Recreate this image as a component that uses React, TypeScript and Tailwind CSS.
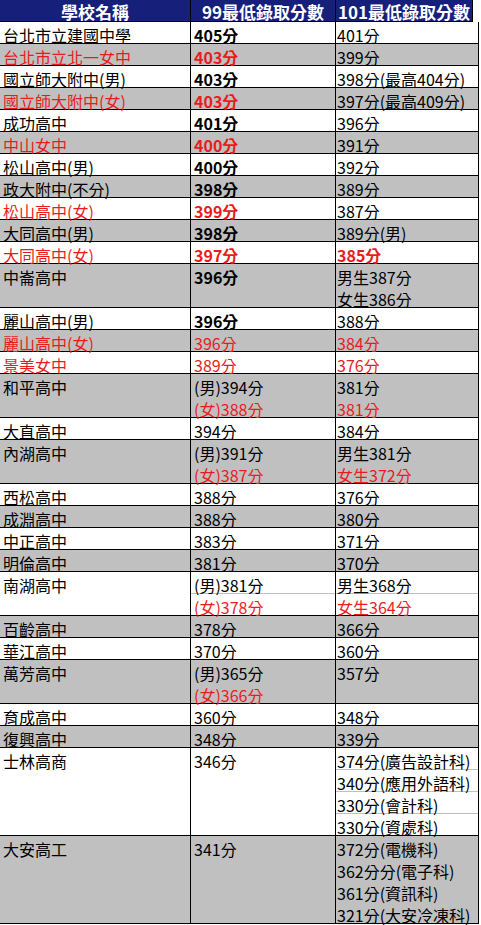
type Line = { t: string; red?: boolean; bold?: boolean };
type Row = { name: string; nameRed?: boolean; a: Line[]; b: Line[]; split?: boolean };

const rows: Row[] = [
  { name: "台北市立建國中學", a: [{ t: "405分", bold: true }], b: [{ t: "401分" }] },
  { name: "台北市立北一女中", nameRed: true, a: [{ t: "403分", bold: true, red: true }], b: [{ t: "399分" }] },
  { name: "國立師大附中(男)", a: [{ t: "403分", bold: true }], b: [{ t: "398分(最高404分)" }] },
  { name: "國立師大附中(女)", nameRed: true, a: [{ t: "403分", bold: true, red: true }], b: [{ t: "397分(最高409分)" }] },
  { name: "成功高中", a: [{ t: "401分", bold: true }], b: [{ t: "396分" }] },
  { name: "中山女中", nameRed: true, a: [{ t: "400分", bold: true, red: true }], b: [{ t: "391分" }] },
  { name: "松山高中(男)", a: [{ t: "400分", bold: true }], b: [{ t: "392分" }] },
  { name: "政大附中(不分)", a: [{ t: "398分", bold: true }], b: [{ t: "389分" }] },
  { name: "松山高中(女)", nameRed: true, a: [{ t: "399分", bold: true, red: true }], b: [{ t: "387分" }] },
  { name: "大同高中(男)", a: [{ t: "398分", bold: true }], b: [{ t: "389分(男)" }] },
  { name: "大同高中(女)", nameRed: true, a: [{ t: "397分", bold: true, red: true }], b: [{ t: "385分", bold: true, red: true }] },
  { name: "中崙高中", a: [{ t: "396分", bold: true }], b: [{ t: "男生387分" }, { t: "女生386分" }] },
  { name: "麗山高中(男)", a: [{ t: "396分", bold: true }], b: [{ t: "388分" }] },
  { name: "麗山高中(女)", nameRed: true, a: [{ t: "396分", red: true }], b: [{ t: "384分", red: true }] },
  { name: "景美女中", nameRed: true, a: [{ t: "389分", red: true }], b: [{ t: "376分", red: true }] },
  { name: "和平高中", a: [{ t: "(男)394分" }, { t: "(女)388分", red: true }], b: [{ t: "381分" }, { t: "381分", red: true }] },
  { name: "大直高中", a: [{ t: "394分" }], b: [{ t: "384分" }] },
  { name: "內湖高中", a: [{ t: "(男)391分" }, { t: "(女)387分", red: true }], b: [{ t: "男生381分" }, { t: "女生372分", red: true }] },
  { name: "西松高中", a: [{ t: "388分" }], b: [{ t: "376分" }] },
  { name: "成淵高中", a: [{ t: "388分" }], b: [{ t: "380分" }] },
  { name: "中正高中", a: [{ t: "383分" }], b: [{ t: "371分" }] },
  { name: "明倫高中", a: [{ t: "381分" }], b: [{ t: "370分" }] },
  { name: "南湖高中", split: true, a: [{ t: "(男)381分" }, { t: "(女)378分", red: true }], b: [{ t: "男生368分" }, { t: "女生364分", red: true }] },
  { name: "百齡高中", a: [{ t: "378分" }], b: [{ t: "366分" }] },
  { name: "華江高中", a: [{ t: "370分" }], b: [{ t: "360分" }] },
  { name: "萬芳高中", a: [{ t: "(男)365分" }, { t: "(女)366分", red: true }], b: [{ t: "357分" }] },
  { name: "育成高中", a: [{ t: "360分" }], b: [{ t: "348分" }] },
  { name: "復興高中", a: [{ t: "348分" }], b: [{ t: "339分" }] },
  {
    name: "士林高商",
    split: true,
    a: [{ t: "346分" }],
    b: [{ t: "374分(廣告設計科)" }, { t: "340分(應用外語科)" }, { t: "330分(會計科)" }, { t: "330分(資處科)" }],
  },
  {
    name: "大安高工",
    a: [{ t: "341分" }],
    b: [{ t: "372分(電機科)" }, { t: "362分分(電子科)" }, { t: "361分(資訊科)" }, { t: "321分(大安冷凍科)" }],
  },
];

const Cell = ({ lines, split, width, pad }: { lines: Line[]; split?: boolean; width: string; pad: string }) => (
  <div className={`flex flex-col items-stretch border-r border-b border-black ${width}`}>
    {lines.map((l, i) => {
      const last = i === lines.length - 1;
      return (
        <div
          key={i}
          className={`w-full whitespace-nowrap pt-[4px] leading-[19px] ${pad} ${last ? "h-[21px]" : "h-[22px]"} ${
            split && !last ? "border-b border-[#c0c0c0]" : ""
          } ${l.red ? "text-[#e81c1c]" : "text-black"} ${l.bold ? "font-bold" : ""}`}
        >
          {l.t}
        </div>
      );
    })}
  </div>
);

export default function App() {
  return (
    <div className="w-[481px] min-h-[925px] bg-white text-[16px] font-['Noto_Sans_CJK_TC','Noto_Sans',sans-serif]">
      <div className="flex h-[22px] text-[17px] font-bold leading-[21px] text-white">
        <div className="w-[191px] border-r border-b border-black bg-[#16207a] pt-[1px] text-center">學校名稱</div>
        <div className="w-[145px] border-r border-b border-black bg-[#16207a] pt-[1px] text-center">99最低錄取分數</div>
        <div className="w-[137px] border-r border-b border-black bg-[#16207a] pt-[1px] text-center whitespace-nowrap">
          101最低錄取分數
        </div>
      </div>
      {rows.map((r, i) => {
        const bg = i % 2 === 1 ? "bg-[#c0c0c0]" : "bg-white";
        return (
          <div key={r.name} className={`flex w-[479px] ${bg}`}>
            <Cell lines={[{ t: r.name, red: r.nameRed }]} width="w-[191px]" pad="pl-[3px]" />
            <Cell lines={r.a} split={r.split} width="w-[145px]" pad="pl-[3px]" />
            <Cell lines={r.b} split={r.split} width="w-[143px]" pad="pl-[1px]" />
          </div>
        );
      })}
    </div>
  );
}
